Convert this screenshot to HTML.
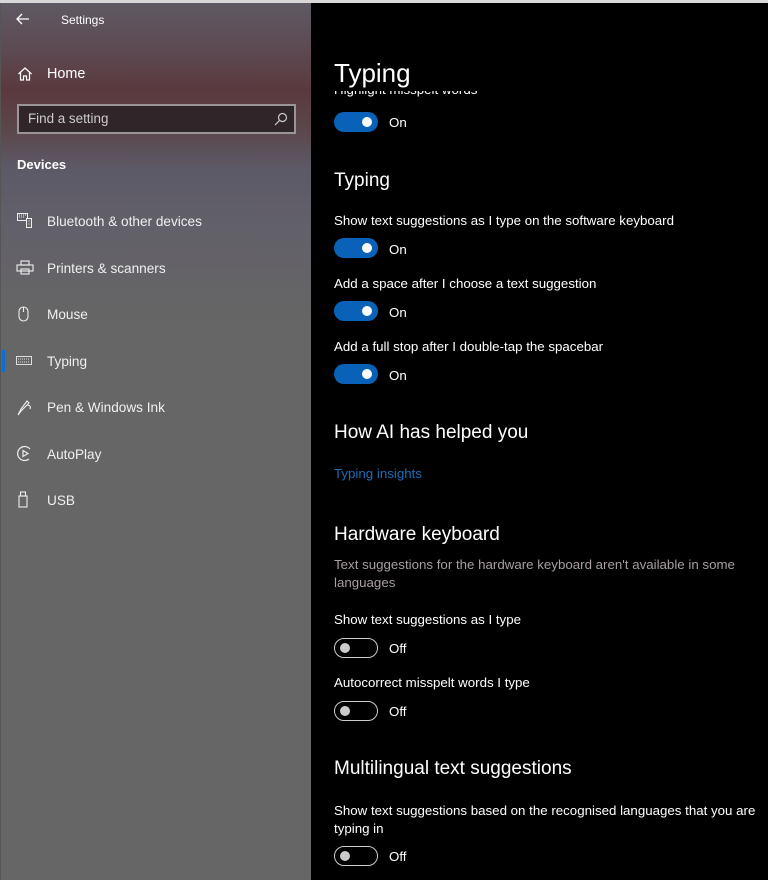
<!DOCTYPE html>
<html><head><meta charset="utf-8"><style>
*{margin:0;padding:0;box-sizing:border-box}
body{width:768px;height:880px;overflow:hidden;background:#000;font-family:"Liberation Sans",sans-serif;position:relative}
.side{position:absolute;left:0;top:0;width:311px;height:880px;background:linear-gradient(180deg,#5e5a64 0px,#5d4a52 50px,#5a393e 90px,#5b4548 125px,#5d5a68 170px,#636168 240px,#666 330px,#666 880px);border-left:1px solid #555}
.top{position:absolute;left:0;top:0;width:768px;height:3px;background:#d8d8d8}
.t{position:absolute;white-space:nowrap;color:#fff}
.s{font-size:13.6px;color:#f0f0f0}
.c{font-size:13.3px;color:#fff}
.h{font-size:19px;color:#fff}
.tg{position:absolute;left:334px;width:44px;height:20px;border-radius:10px}
.on{background:#0a62b8}
.on::after{content:"";position:absolute;right:6px;top:5px;width:10px;height:10px;border-radius:50%;background:#fff}
.off{border:1.5px solid #ccc}
.off::after{content:"";position:absolute;left:4.5px;top:3.5px;width:10px;height:10px;border-radius:50%;background:#ccc}
.lb{position:absolute;left:389px;font-size:13.3px;color:#fff}
svg{position:absolute}
</style></head><body>
<div class="side"></div>
<div class="top"></div>
<svg style="left:16px;top:13px" width="14" height="12" viewBox="0 0 14 12"><path d="M13 6H2M6 1L1 6l5 5" stroke="#fff" stroke-width="1.3" fill="none"/></svg>
<div class="t" style="left:61px;top:13px;font-size:12px">Settings</div>
<svg style="left:17px;top:67px" width="16" height="14" viewBox="0 0 16 14"><path d="M1.5 7L8 1l6.5 6M3.5 5.5V13h3V9h3v4h3V5.5" stroke="#fff" stroke-width="1.2" fill="none"/></svg>
<div class="t" style="left:47px;top:66px;font-size:14.4px">Home</div>
<div style="position:absolute;left:17px;top:104px;width:279px;height:30px;border:2px solid #9a9598;background:#302528"></div>
<div class="t" style="left:28px;top:111px;font-size:13.4px;color:#ccc">Find a setting</div>
<svg style="left:274px;top:112px" width="14" height="14" viewBox="0 0 14 14"><circle cx="8.5" cy="5.5" r="4" stroke="#ccc" fill="none" stroke-width="1.2"/><path d="M5.5 8.5L1 13" stroke="#ccc" stroke-width="1.2"/></svg>
<div class="t" style="left:17px;top:157px;font-size:13px;font-weight:bold">Devices</div>

<svg style="left:17px;top:213px" width="16" height="16" viewBox="0 0 16 16" fill="none" stroke="#eee" stroke-width="1"><rect x="0.5" y="0.5" width="10" height="7"/><rect x="9.5" y="5.5" width="5" height="9" fill="#666"/><path d="M2 2h1M4 2h1M6 2h1M8 2h1M2 4h1M4 4h1M6 4h1M11.5 8h1M11.5 11h1"/></svg>
<div class="t s" style="left:47px;top:214px">Bluetooth &amp; other devices</div>
<svg style="left:16px;top:260px" width="18" height="16" viewBox="0 0 18 16" fill="none" stroke="#eee" stroke-width="1.1"><rect x="5" y="1" width="8" height="4"/><rect x="1" y="5" width="16" height="6"/><rect x="5" y="9" width="8" height="5"/></svg>
<div class="t s" style="left:47px;top:261px">Printers &amp; scanners</div>
<svg style="left:18px;top:306px" width="12" height="16" viewBox="0 0 12 16" fill="none" stroke="#eee" stroke-width="1.1"><rect x="1" y="1" width="9" height="14" rx="4.5"/><path d="M5.5 1v5"/></svg>
<div class="t s" style="left:47px;top:307px">Mouse</div>
<div style="position:absolute;left:2px;top:350px;width:3px;height:22px;background:#0a6fd0"></div>
<svg style="left:16px;top:356px" width="16" height="9" viewBox="0 0 16 9" fill="none" stroke="#ddd" stroke-width="1"><rect x="0.5" y="0.5" width="15" height="8"/><path d="M2 3h12M2 6h12" stroke-dasharray="1 1"/></svg>
<div class="t s" style="left:47px;top:354px">Typing</div>
<svg style="left:16px;top:399px" width="18" height="18" viewBox="0 0 18 18" fill="none" stroke="#eee" stroke-width="1.1"><path d="M2 16l3-6 6-8 2 2-8 8zM11 6c3 0 4 2 3 4"/></svg>
<div class="t s" style="left:47px;top:400px">Pen &amp; Windows Ink</div>
<svg style="left:16px;top:445px" width="17" height="17" viewBox="0 0 17 17" fill="none" stroke="#eee" stroke-width="1.2"><path d="M14 4A7 7 0 1 0 13 14"/><path d="M7 5.5v6l5-3z"/></svg>
<div class="t s" style="left:47px;top:447px">AutoPlay</div>
<svg style="left:18px;top:491px" width="10" height="17" viewBox="0 0 10 17" fill="none" stroke="#eee" stroke-width="1.1"><rect x="1" y="5" width="8" height="11"/><rect x="2.5" y="1" width="5" height="4"/></svg>
<div class="t s" style="left:47px;top:493px">USB</div>

<div class="t" style="left:334px;top:58px;font-size:26px">Typing</div>
<div style="position:absolute;left:334px;top:91px;width:200px;height:6px;overflow:hidden"><div class="t c" style="left:0;top:-9px">Highlight misspelt words</div></div>
<div class="tg on" style="top:112px"></div><div class="lb" style="top:115px">On</div>
<div class="t h" style="left:334px;top:170px">Typing</div>
<div class="t c" style="left:334px;top:213px">Show text suggestions as I type on the software keyboard</div>
<div class="tg on" style="top:238px"></div><div class="lb" style="top:242px">On</div>
<div class="t c" style="left:334px;top:276px">Add a space after I choose a text suggestion</div>
<div class="tg on" style="top:301px"></div><div class="lb" style="top:305px">On</div>
<div class="t c" style="left:334px;top:339px">Add a full stop after I double-tap the spacebar</div>
<div class="tg on" style="top:364px"></div><div class="lb" style="top:368px">On</div>
<div class="t h" style="left:334px;top:422px">How AI has helped you</div>
<div class="t c" style="left:334px;top:466px;color:#1a6eb8">Typing insights</div>
<div class="t h" style="left:334px;top:524px">Hardware keyboard</div>
<div class="t c" style="left:334px;top:556px;color:#a89ea4;line-height:18px;white-space:normal;width:430px">Text suggestions for the hardware keyboard aren't available in some languages</div>
<div class="t c" style="left:334px;top:612px">Show text suggestions as I type</div>
<div class="tg off" style="top:638px"></div><div class="lb" style="top:641px">Off</div>
<div class="t c" style="left:334px;top:675px">Autocorrect misspelt words I type</div>
<div class="tg off" style="top:701px"></div><div class="lb" style="top:704px">Off</div>
<div class="t h" style="left:334px;top:758px">Multilingual text suggestions</div>
<div class="t c" style="left:334px;top:803px">Show text suggestions based on the recognised languages that you are</div>
<div class="t c" style="left:334px;top:821px">typing in</div>
<div class="tg off" style="top:846px"></div><div class="lb" style="top:849px">Off</div>
</body></html>
